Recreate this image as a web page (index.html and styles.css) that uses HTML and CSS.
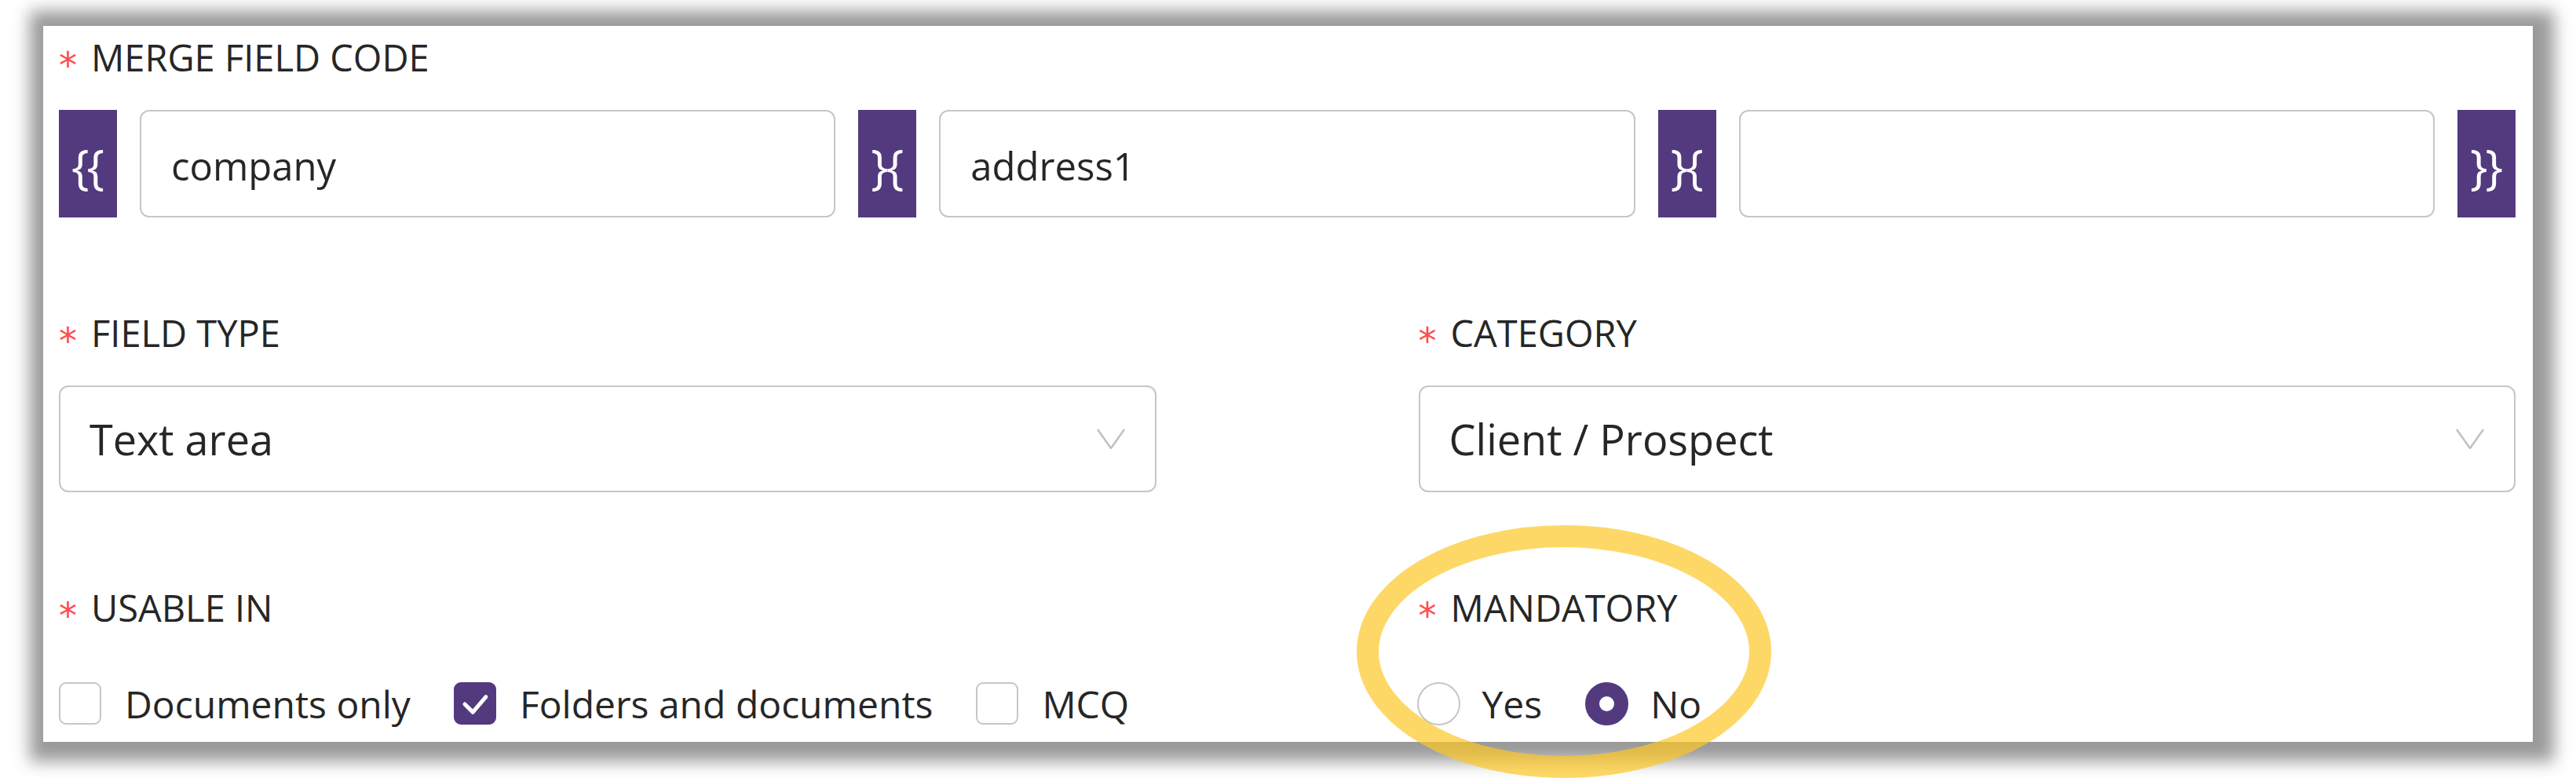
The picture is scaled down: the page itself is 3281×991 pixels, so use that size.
FILE: index.html
```html
<!DOCTYPE html>
<html lang="en">
<head>
  <meta charset="UTF-8">
  <meta name="viewport" content="width=device-width, initial-scale=1.0">
  <title>Merge Field</title>
  <link rel="stylesheet" href="styles.css">
</head>
<body>
  <div class="sheet">
    <div class="field">
      <label class="field-label"><span class="req">*</span>MERGE FIELD CODE</label>
      <div class="code-row">
        <span class="brace">{{</span>
        <input class="code-input" type="text" value="company" />
        <span class="brace">}{</span>
        <input class="code-input" type="text" value="address1" />
        <span class="brace">}{</span>
        <input class="code-input" type="text" value="" />
        <span class="brace">}}</span>
      </div>
    </div>

    <div class="grid">
      <div class="field">
        <label class="field-label"><span class="req">*</span>FIELD TYPE</label>
        <div class="select">
          <span>Text area</span>
          <svg class="chevron" viewBox="0 0 36 26"><polyline points="1,1 18,25 35,1" /></svg>
        </div>
      </div>

      <div class="field">
        <label class="field-label"><span class="req">*</span>CATEGORY</label>
        <div class="select">
          <span>Client / Prospect</span>
          <svg class="chevron" viewBox="0 0 36 26"><polyline points="1,1 18,25 35,1" /></svg>
        </div>
      </div>

      <div class="field">
        <label class="field-label"><span class="req">*</span>USABLE IN</label>
        <div class="options">
          <label class="option"><span class="checkbox"></span>Documents only</label>
          <label class="option">
            <span class="checkbox checked">
              <svg viewBox="0 0 54 54"><polyline points="13,28 24,39 42,18" /></svg>
            </span>Folders and documents
          </label>
          <label class="option"><span class="checkbox"></span>MCQ</label>
        </div>
      </div>

      <div class="field">
        <label class="field-label"><span class="req">*</span>MANDATORY</label>
        <div class="options radios">
          <label class="option"><span class="radio"></span>Yes</label>
          <label class="option"><span class="radio checked"></span>No</label>
        </div>
      </div>
    </div>

    <!-- highlight drawn over the screenshot -->
    <svg class="highlight" viewBox="0 0 600 341">
      <ellipse cx="292" cy="180" rx="250" ry="147" />
    </svg>
  </div>
</body>
</html>
```

FILE: styles.css
```css
body {
  margin: 0;
  height: 991px;
  background-color: #fff;
  font-family: "Open Sans", sans-serif;
  color: #262626; /* near black text */
  overflow: hidden;
}

.sheet {
  position: relative;
  margin: 33px 55px 0;
  padding: 12px 22px 22px 20px;
  background-color: #fff;
  box-shadow: 5px 3px 20px 22px rgba(0, 0, 0, 0.4);
}

.field-label {
  display: block;
  height: 56px;
  line-height: 56px;
  font-size: 47px;
  margin-bottom: 39px;
  white-space: nowrap;
}

.req {
  display: inline-block;
  width: 41px;
  color: #ff4d4f; /* red required mark */
  font-family: "DejaVu Sans", sans-serif;
  font-size: 46px;
  vertical-align: top;
  position: relative;
  top: 10px;
}

.code-row {
  display: flex;
  gap: 29px;
  height: 137px;
}

.brace {
  flex: 0 0 74px;
  display: flex;
  align-items: center;
  justify-content: center;
  background-color: #533a7f; /* purple */
  color: #fff;
  font-size: 60px;
  letter-spacing: -3px;
  padding-right: 3px;
  padding-top: 4px;
  box-sizing: border-box;
}

.code-input,
.select {
  flex: 1;
  min-width: 0;
  height: 137px;
  box-sizing: border-box;
  border: 2px solid #c6c6c6; /* light gray border */
  border-radius: 12px;
  padding: 0 38px;
  font-family: "Open Sans", sans-serif;
  font-size: 54px;
  color: #262626;
  background-color: #fff;
  outline: none;
}

.code-input {
  font-size: 49px;
  padding-top: 4px;
}

.grid {
  display: grid;
  grid-template-columns: 1fr 1fr;
  column-gap: 334px;
  row-gap: 119px;
  margin-top: 119px;
}

.select {
  display: flex;
  align-items: center;
  justify-content: space-between;
  height: 136px;
  padding: 0 38px 0 37px;
}

.chevron {
  width: 36px;
  height: 26px;
}

.chevron polyline {
  fill: none;
  stroke: #c0c0c0;
  stroke-width: 2.5;
}

.options {
  display: flex;
  gap: 55px;
  height: 54px;
  margin-top: 67px;
}

.option {
  display: flex;
  align-items: center;
  gap: 30px;
  font-size: 48px;
  white-space: nowrap;
}

.radios {
  margin-left: -2px;
}

.radios .option {
  gap: 28px;
}

.checkbox {
  width: 54px;
  height: 54px;
  box-sizing: border-box;
  border: 2px solid #c6c6c6;
  border-radius: 9px;
  background-color: #fff;
}

.checkbox.checked {
  border-color: #533a7f;
  background-color: #533a7f;
}

.checkbox svg {
  display: block;
  width: 50px;
  height: 50px;
}

.checkbox polyline {
  fill: none;
  stroke: #fff;
  stroke-width: 5.5;
  stroke-linecap: round;
  stroke-linejoin: round;
}

.radio {
  width: 55px;
  height: 55px;
  box-sizing: border-box;
  border: 2px solid #c6c6c6;
  border-radius: 50%;
  background-color: #fff;
}

.radio.checked {
  border: 18px solid #533a7f;
}

/* yellow marker ellipse */
.highlight {
  position: absolute;
  left: 1645px;
  top: 617px;
  width: 600px;
  height: 341px;
  overflow: visible;
  pointer-events: none;
}

.highlight ellipse {
  fill: none;
  stroke: rgb(252, 199, 38);
  stroke-opacity: 0.7;
  stroke-width: 28;
}
```
